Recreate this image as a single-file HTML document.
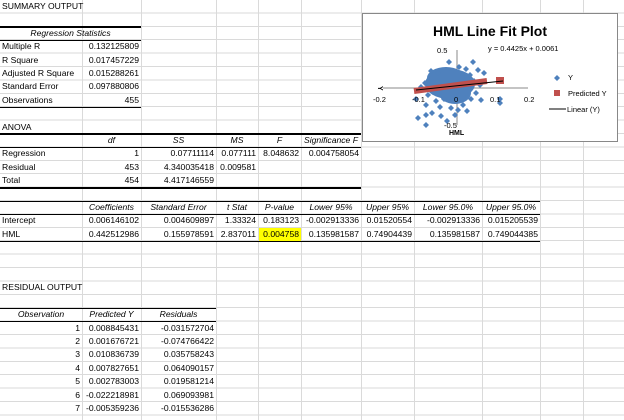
<!DOCTYPE html>
<html><head><meta charset="utf-8"><style>
body{margin:0;width:624px;height:420px;overflow:hidden;background:#fff;position:relative;font-family:"Liberation Sans",sans-serif;font-size:8.6px;color:#000}
.g{position:absolute;left:0;top:0;width:624px;height:420px;
background-image:repeating-linear-gradient(to bottom,transparent 0,transparent 12.4px,#dadada 12.4px,#dadada 13.4px);}
.v{position:absolute;top:0;height:420px;width:1px;background:#dadada}
.c{position:absolute;height:13.4px;line-height:13.4px;white-space:nowrap;padding:0 2px;box-sizing:border-box;overflow:visible}
.r{text-align:right}.h{text-align:center;font-style:italic}
.tk{position:absolute;height:1.6px;background:#000}
.tn{position:absolute;height:1px;background:#000}
</style></head><body>
<div class="g"></div>
<div class="v" style="left:82px"></div><div class="v" style="left:141px"></div><div class="v" style="left:216px"></div><div class="v" style="left:258px"></div><div class="v" style="left:301px"></div><div class="v" style="left:361px"></div><div class="v" style="left:414px"></div><div class="v" style="left:482px"></div><div class="v" style="left:540px"></div><div class="v" style="left:583px"></div>

<div class="c" style="left:0;top:0">SUMMARY OUTPUT</div>
<div class="c h" style="left:0;width:141px;top:26.8px">Regression Statistics</div>
<div class="c" style="left:0;top:40.2px">Multiple R</div><div class="c r" style="left:82px;width:59px;top:40.2px">0.132125809</div>
<div class="c" style="left:0;top:53.6px">R Square</div><div class="c r" style="left:82px;width:59px;top:53.6px">0.017457229</div>
<div class="c" style="left:0;top:67px">Adjusted R Square</div><div class="c r" style="left:82px;width:59px;top:67px">0.015288261</div>
<div class="c" style="left:0;top:80.4px">Standard Error</div><div class="c r" style="left:82px;width:59px;top:80.4px">0.097880806</div>
<div class="c" style="left:0;top:93.8px">Observations</div><div class="c r" style="left:82px;width:59px;top:93.8px">455</div>
<div class="tk" style="left:0;width:141px;top:26px"></div><div class="tn" style="left:0;width:141px;top:39.7px"></div><div class="tk" style="left:0;width:141px;top:106.5px"></div>

<div class="c" style="left:0;top:120.6px">ANOVA</div>
<div class="c h" style="left:82px;width:59px;top:134px">df</div><div class="c h" style="left:141px;width:75px;top:134px">SS</div><div class="c h" style="left:216px;width:42px;top:134px">MS</div><div class="c h" style="left:258px;width:43px;top:134px">F</div><div class="c h" style="left:301px;width:60px;top:134px">Significance F</div>
<div class="c" style="left:0;top:147.4px">Regression</div><div class="c r" style="left:82px;width:59px;top:147.4px">1</div><div class="c r" style="left:141px;width:75px;top:147.4px">0.07711114</div><div class="c r" style="left:216px;width:42px;top:147.4px">0.077111</div><div class="c r" style="left:258px;width:43px;top:147.4px">8.048632</div><div class="c r" style="left:301px;width:60px;top:147.4px">0.004758054</div>
<div class="c" style="left:0;top:160.8px">Residual</div><div class="c r" style="left:82px;width:59px;top:160.8px">453</div><div class="c r" style="left:141px;width:75px;top:160.8px">4.340035418</div><div class="c r" style="left:216px;width:42px;top:160.8px">0.009581</div>
<div class="c" style="left:0;top:174.2px">Total</div><div class="c r" style="left:82px;width:59px;top:174.2px">454</div><div class="c r" style="left:141px;width:75px;top:174.2px">4.417146559</div>
<div class="tk" style="left:0;width:361px;top:133.3px"></div><div class="tn" style="left:0;width:361px;top:147px"></div><div class="tk" style="left:0;width:361px;top:187px"></div>

<div class="c h" style="left:82px;width:59px;top:201px">Coefficients</div><div class="c h" style="left:141px;width:75px;top:201px">Standard Error</div><div class="c h" style="left:216px;width:42px;top:201px">t Stat</div><div class="c h" style="left:258px;width:43px;top:201px">P-value</div><div class="c h" style="left:301px;width:60px;top:201px">Lower 95%</div><div class="c h" style="left:361px;width:53px;top:201px">Upper 95%</div><div class="c h" style="left:414px;width:68px;top:201px">Lower 95.0%</div><div class="c h" style="left:482px;width:58px;top:201px">Upper 95.0%</div>
<div class="c" style="left:0;top:214.4px">Intercept</div><div class="c r" style="left:82px;width:59px;top:214.4px">0.006146102</div><div class="c r" style="left:141px;width:75px;top:214.4px">0.004609897</div><div class="c r" style="left:216px;width:42px;top:214.4px">1.33324</div><div class="c r" style="left:258px;width:43px;top:214.4px">0.183123</div><div class="c r" style="left:301px;width:60px;top:214.4px">-0.002913336</div><div class="c r" style="left:361px;width:53px;top:214.4px">0.01520554</div><div class="c r" style="left:414px;width:68px;top:214.4px">-0.002913336</div><div class="c r" style="left:482px;width:58px;top:214.4px">0.015205539</div>
<div class="c" style="left:0;top:227.8px">HML</div><div class="c r" style="left:82px;width:59px;top:227.8px">0.442512986</div><div class="c r" style="left:141px;width:75px;top:227.8px">0.155978591</div><div class="c r" style="left:216px;width:42px;top:227.8px">2.837011</div><div class="c r" style="left:259px;width:42px;top:228px;height:12.6px;line-height:12.6px;background:#ffff00">0.004758</div><div class="c r" style="left:301px;width:60px;top:227.8px">0.135981587</div><div class="c r" style="left:361px;width:53px;top:227.8px">0.74904439</div><div class="c r" style="left:414px;width:68px;top:227.8px">0.135981587</div><div class="c r" style="left:482px;width:58px;top:227.8px">0.749044385</div>
<div class="tk" style="left:0;width:540px;top:200.5px"></div><div class="tn" style="left:0;width:540px;top:214px"></div><div class="tk" style="left:0;width:540px;top:240.6px"></div>

<div class="c" style="left:0;top:281.4px">RESIDUAL OUTPUT</div>
<div class="c h" style="left:0;width:82px;top:308.2px">Observation</div><div class="c h" style="left:82px;width:59px;top:308.2px">Predicted Y</div><div class="c h" style="left:141px;width:75px;top:308.2px">Residuals</div>
<div class="tk" style="left:0;width:216px;top:307.5px"></div><div class="tn" style="left:0;width:216px;top:321.2px"></div>
<div class="c r" style="left:0;width:82px;top:321.6px">1</div><div class="c r" style="left:82px;width:59px;top:321.6px">0.008845431</div><div class="c r" style="left:141px;width:75px;top:321.6px">-0.031572704</div>
<div class="c r" style="left:0;width:82px;top:335px">2</div><div class="c r" style="left:82px;width:59px;top:335px">0.001676721</div><div class="c r" style="left:141px;width:75px;top:335px">-0.074766422</div>
<div class="c r" style="left:0;width:82px;top:348.4px">3</div><div class="c r" style="left:82px;width:59px;top:348.4px">0.010836739</div><div class="c r" style="left:141px;width:75px;top:348.4px">0.035758243</div>
<div class="c r" style="left:0;width:82px;top:361.8px">4</div><div class="c r" style="left:82px;width:59px;top:361.8px">0.007827651</div><div class="c r" style="left:141px;width:75px;top:361.8px">0.064090157</div>
<div class="c r" style="left:0;width:82px;top:375.2px">5</div><div class="c r" style="left:82px;width:59px;top:375.2px">0.002783003</div><div class="c r" style="left:141px;width:75px;top:375.2px">0.019581214</div>
<div class="c r" style="left:0;width:82px;top:388.6px">6</div><div class="c r" style="left:82px;width:59px;top:388.6px">-0.022218981</div><div class="c r" style="left:141px;width:75px;top:388.6px">0.069093981</div>
<div class="c r" style="left:0;width:82px;top:402px">7</div><div class="c r" style="left:82px;width:59px;top:402px">-0.005359236</div><div class="c r" style="left:141px;width:75px;top:402px">-0.015536286</div>

<svg style="position:absolute;left:0;top:0" width="624" height="420" font-family="Liberation Sans, sans-serif">
<rect x="362.5" y="13.5" width="255" height="128" fill="#fff" stroke="#888" stroke-width="1"/>
<text x="490" y="36" text-anchor="middle" font-size="14" font-weight="bold">HML Line Fit  Plot</text>
<line x1="383" y1="88" x2="528" y2="88" stroke="#888"/>
<line x1="457" y1="50" x2="457" y2="125" stroke="#888"/>
<g fill="#4f81bd">
<ellipse cx="450" cy="84" rx="25" ry="15"/>
<ellipse cx="446" cy="78" rx="19" ry="11"/>
<ellipse cx="455" cy="93" rx="16" ry="11"/>
</g>
<g fill="#4f81bd">
<path d="M449,59l3,3l-3,3l-3-3z"/><path d="M473,59l3,3l-3,3l-3-3z"/><path d="M478,67l3,3l-3,3l-3-3z"/><path d="M484,70l3,3l-3,3l-3-3z"/><path d="M438,70l3,3l-3,3l-3-3z"/><path d="M425,80l3,3l-3,3l-3-3z"/><path d="M416,96l3,3l-3,3l-3-3z"/><path d="M426,102l3,3l-3,3l-3-3z"/><path d="M432,110l3,3l-3,3l-3-3z"/><path d="M426,112l3,3l-3,3l-3-3z"/><path d="M441,113l3,3l-3,3l-3-3z"/><path d="M418,115l3,3l-3,3l-3-3z"/><path d="M426,122l3,3l-3,3l-3-3z"/><path d="M447,118l3,3l-3,3l-3-3z"/><path d="M451,105l3,3l-3,3l-3-3z"/><path d="M458,107l3,3l-3,3l-3-3z"/><path d="M467,108l3,3l-3,3l-3-3z"/><path d="M471,96l3,3l-3,3l-3-3z"/><path d="M481,97l3,3l-3,3l-3-3z"/><path d="M500,96l3,3l-3,3l-3-3z"/><path d="M500,100l3,3l-3,3l-3-3z"/><path d="M474,78l3,3l-3,3l-3-3z"/><path d="M480,82l3,3l-3,3l-3-3z"/><path d="M436,98l3,3l-3,3l-3-3z"/>
<path d="M431,68l3,3l-3,3l-3-3z"/><path d="M459,64l3,3l-3,3l-3-3z"/><path d="M466,66l3,3l-3,3l-3-3z"/><path d="M470,72l3,3l-3,3l-3-3z"/><path d="M421,84l3,3l-3,3l-3-3z"/><path d="M428,92l3,3l-3,3l-3-3z"/><path d="M440,104l3,3l-3,3l-3-3z"/><path d="M463,102l3,3l-3,3l-3-3z"/><path d="M476,90l3,3l-3,3l-3-3z"/><path d="M444,96l3,3l-3,3l-3-3z"/><path d="M455,112l3,3l-3,3l-3-3z"/>
</g>
<line x1="414" y1="91" x2="487" y2="81" stroke="#c0504d" stroke-width="6"/>
<rect x="496" y="77" width="8" height="7" fill="#c0504d"/>
<line x1="416" y1="90" x2="503" y2="81" stroke="#000" stroke-width="1"/>
<g font-size="7.5" fill="#000">
<text x="437" y="53">0.5</text>
<text x="444" y="128">-0.5</text>
<text x="488" y="51">y = 0.4425x + 0.0061</text>
<text x="373" y="102">-0.2</text>
<text x="412" y="102">-0.1</text>
<text x="454" y="102">0</text>
<text x="490" y="102">0.1</text>
<text x="524" y="102">0.2</text>
<text x="449" y="135" font-weight="bold" font-size="7">HML</text>
<text x="0" y="0" transform="translate(378,86) rotate(90)" font-size="7" font-weight="bold">Y</text>
<text x="568" y="80">Y</text>
<text x="568" y="96">Predicted Y</text>
<text x="567" y="112">Linear (Y)</text>
</g>
<path d="M557,75l3,3l-3,3l-3-3z" fill="#4f81bd"/>
<rect x="554" y="90" width="6" height="6" fill="#c0504d"/>
<line x1="549" y1="109" x2="566" y2="109" stroke="#000"/>
</svg>
</body></html>
